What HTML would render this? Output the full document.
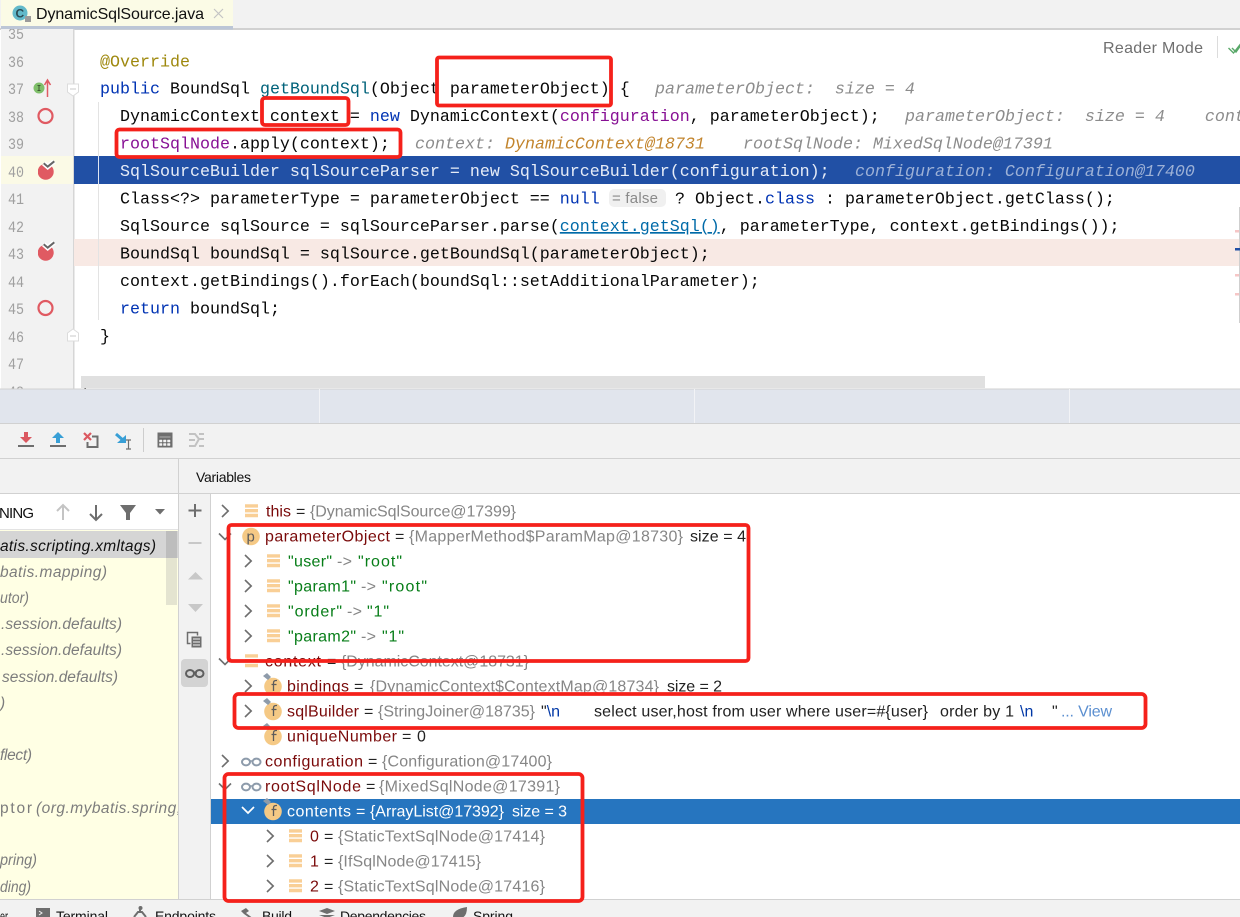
<!DOCTYPE html>
<html><head><meta charset="utf-8"><title>DynamicSqlSource.java</title>
<style>
html,body{margin:0;padding:0;background:#fff;overflow:hidden}
svg{display:block}
text{white-space:pre}
.m{font-family:"Liberation Mono",monospace;font-size:16.67px;fill:#080808}
.n{font-family:"Liberation Mono",monospace;font-size:16px;fill:#a0a0a0}
.h{font-family:"Liberation Mono",monospace;font-size:16.67px;font-style:italic;fill:#8c8c8c}
.s{font-family:"Liberation Sans",sans-serif;font-size:16px}
.v{fill:#7a0a0a}.e{fill:#222}.g{fill:#868686}.t{fill:#067d17}.k{fill:#0033b3}.p{fill:#871094}
.i{font-family:"Liberation Sans",sans-serif;font-size:15.500px;font-style:italic;fill:#7d7d7d}
.b{fill:none;stroke:#f5211b;stroke-width:3.8}
</style></head><body>
<svg width="1240" height="917" viewBox="0 0 1240 917" xmlns="http://www.w3.org/2000/svg">
<defs>
<symbol id="l" width="14" height="14" viewBox="0 0 14 14"><path d="M0 .2h13v3.400H0zM0 5h13v3.400H0zM0 9.800h13v3.400H0z" fill="#f9cf96"/></symbol>
<symbol id="r" width="10" height="14" viewBox="0 0 10 14"><path d="M2 1l6.200 6-6.200 6" fill="none" stroke="#6e6e6e" stroke-width="1.600"/></symbol>
<symbol id="d" width="14" height="10" viewBox="0 0 14 10"><path d="M1 1.500l6 6 6-6" fill="none" stroke="#6e6e6e" stroke-width="1.600"/></symbol>
<symbol id="f" width="22" height="24" viewBox="0 0 22 24"><circle cx="11" cy="14.500" r="8.800" fill="#f5c985"/><path d="M8.500 20V12q0-2.500 2.500-2.500h1M6.500 13.500h5" transform="translate(3 -1)" fill="none" stroke="#5c5c5c" stroke-width="1.300"/><path d="M1 4l4-3 4 4-3 3z" fill="#8e9baa"/></symbol>
<symbol id="g" width="21" height="12" viewBox="0 0 21 12"><ellipse cx="5" cy="6" rx="4" ry="3.400" fill="none" stroke="#8d9bab" stroke-width="2"/><ellipse cx="15.500" cy="6" rx="4" ry="3.400" fill="none" stroke="#8d9bab" stroke-width="2"/><path d="M9 5h2.500" stroke="#8d9bab" stroke-width="1.500"/></symbol>
<symbol id="bp" width="20" height="22" viewBox="0 0 20 22"><circle cx="7.700" cy="11.700" r="8" fill="#e05a62"/><path d="M5.700 3.300l4 3.400 6.600-5.400" fill="none" stroke="#fff" stroke-width="5"/><path d="M5.700 3.300l4 3.400 6.600-5.400" fill="none" stroke="#666" stroke-width="2"/></symbol>
<clipPath id="ed"><rect x="0" y="29" width="1240" height="360"/></clipPath>
<clipPath id="fr"><rect x="0" y="530" width="178" height="369"/></clipPath>
</defs>

<!-- tab bar -->
<rect width="1240" height="917" fill="#f2f2f2"/>
<rect x="0" y="29" width="1240" height="360" fill="#fff"/>
<rect x="0" y="28" width="1240" height="2" fill="#d1d1d1"/>
<rect x="1" y="0" width="232" height="27" fill="#fbfbe6"/>
<rect x="1" y="26" width="232" height="3.500" fill="#bcc6d6"/>
<circle cx="20" cy="13" r="7.500" fill="#62b9ca"/>
<text x="15.500" y="17.500" font-family="Liberation Sans,sans-serif" font-size="12" font-weight="bold" fill="#2c4a52">C</text>
<rect x="25" y="16" width="6" height="6" fill="#9b9b9b"/>
<text class="s" x="36" y="19" textLength="168" fill="#111">DynamicSqlSource.java</text>
<path d="M214 9l9 9M223 9l-9 9" stroke="#c4c4c4" stroke-width="1.200"/>

<!-- gutter -->
<g clip-path="url(#ed)">
<rect x="1" y="29" width="72" height="360" fill="#f2f2f2"/>
<rect x="73" y="29" width="1.500" height="360" fill="#d6d6d6"/>
<rect x="1" y="156" width="72" height="28" fill="#fbfae6"/>
<rect x="74" y="156" width="1166" height="28" fill="#2150a5"/>
<rect x="74" y="239" width="1166" height="27" fill="#f8e9e4"/>
<path d="M98.500 102V320" stroke="#e3e3e3" stroke-width="1"/>
<path d="M98.500 156V184" stroke="#dfe6f3" stroke-width="1"/>

<text class="n" x="8" y="39" textLength="16" lengthAdjust="spacingAndGlyphs">35</text>
<text class="n" x="8" y="67" textLength="16" lengthAdjust="spacingAndGlyphs">36</text>
<text class="n" x="8" y="94" textLength="16" lengthAdjust="spacingAndGlyphs">37</text>
<text class="n" x="8" y="122" textLength="16" lengthAdjust="spacingAndGlyphs">38</text>
<text class="n" x="8" y="149" textLength="16" lengthAdjust="spacingAndGlyphs">39</text>
<text class="n" x="8" y="177" textLength="16" lengthAdjust="spacingAndGlyphs">40</text>
<text class="n" x="8" y="204" textLength="16" lengthAdjust="spacingAndGlyphs">41</text>
<text class="n" x="8" y="232" textLength="16" lengthAdjust="spacingAndGlyphs">42</text>
<text class="n" x="8" y="259" textLength="16" lengthAdjust="spacingAndGlyphs">43</text>
<text class="n" x="8" y="287" textLength="16" lengthAdjust="spacingAndGlyphs">44</text>
<text class="n" x="8" y="314" textLength="16" lengthAdjust="spacingAndGlyphs">45</text>
<text class="n" x="8" y="342" textLength="16" lengthAdjust="spacingAndGlyphs">46</text>
<text class="n" x="8" y="369" textLength="16" lengthAdjust="spacingAndGlyphs">47</text>
<text class="n" x="8" y="397" textLength="16" lengthAdjust="spacingAndGlyphs">48</text>

<!-- gutter icons -->
<circle cx="39" cy="88" r="5.500" fill="#7fbf6a"/><path d="M37.500 85.500h3M39 85.500v5M37.500 90.500h3" stroke="#3d5c32" stroke-width="1"/>
<path d="M47.500 97V81M44.500 85l3-5 3 5" fill="none" stroke="#df5b63" stroke-width="1.500"/>
<circle cx="45.500" cy="116" r="7" fill="none" stroke="#e05a62" stroke-width="2.200"/>
<circle cx="45.500" cy="308" r="7" fill="none" stroke="#e05a62" stroke-width="2.200"/>
<use href="#bp" x="38" y="160"/>
<use href="#bp" x="38" y="241"/>
<path d="M67.500 84h11v8l-5.500 4-5.500-4z" fill="#fff" stroke="#dcdcdc"/><path d="M70 89h6" stroke="#c8c8c8"/>
<path d="M67.500 333l5.500-4 5.500 4v8h-11z" fill="#fff" stroke="#dcdcdc"/><path d="M70 336h6" stroke="#c8c8c8"/>

<!-- code -->
<text class="m" x="100" y="66.500" style="fill:#9e880d">@Override</text>
<text class="m" x="100" y="93.500"><tspan class="k">public</tspan> BoundSql <tspan style="fill:#00627a">getBoundSql</tspan>(Object parameterObject) {</text>
<text class="h" x="655" y="93.500">parameterObject:  size = 4</text>
<text class="m" x="120" y="121">DynamicContext context = <tspan class="k">new</tspan> DynamicContext(<tspan class="p">configuration</tspan>, parameterObject);</text>
<text class="h" x="905" y="121">parameterObject:  size = 4    context: DynamicContext@18731</text>
<text class="m" x="120" y="148.500"><tspan class="p">rootSqlNode</tspan>.apply(context);</text>
<text class="h" x="415" y="148.500">context: <tspan style="fill:#c2842c">DynamicContext@18731</tspan></text>
<text class="h" x="743" y="148.500">rootSqlNode: MixedSqlNode@17391</text>
<text class="m" x="120" y="176" style="fill:#e6ecf7">SqlSourceBuilder sqlSourceParser = new SqlSourceBuilder(configuration);</text>
<text class="h" x="855" y="176" style="fill:#9db1d6">configuration: Configuration@17400</text>
<text class="m" x="120" y="203.500">Class&lt;?&gt; parameterType = parameterObject == <tspan class="k">null</tspan></text>
<rect x="609" y="189" width="57" height="18" rx="5" fill="#f0f0f0"/>
<text class="s" x="612" y="203" textLength="46" style="fill:#8a8a8a;font-size:15px">= false</text>
<text class="m" x="675" y="203.500">? Object.<tspan class="k">class</tspan> : parameterObject.getClass();</text>
<text class="m" x="120" y="231">SqlSource sqlSource = sqlSourceParser.parse(<tspan style="fill:#006aa8;text-decoration:underline">context.getSql()</tspan>, parameterType, context.getBindings());</text>
<text class="m" x="120" y="258.500">BoundSql boundSql = sqlSource.getBoundSql(parameterObject);</text>
<text class="m" x="120" y="286">context.getBindings().forEach(boundSql::setAdditionalParameter);</text>
<text class="m" x="120" y="313.500"><tspan class="k">return</tspan> boundSql;</text>
<text class="m" x="100" y="341">}</text>
<text class="m" x="80" y="396">}</text>

<rect x="81" y="376" width="904" height="12" fill="#e0e0e0"/>
<rect x="1239" y="207" width="1" height="116" fill="#cfcfcf"/>
<rect x="1235" y="230" width="4" height="2.500" fill="#f6c6c6"/>
<rect x="1235" y="248" width="5" height="2.500" fill="#2150a5"/>
<rect x="1235" y="274" width="4" height="2.500" fill="#f6c6c6"/>
<rect x="1235" y="293" width="4" height="2.500" fill="#f6c6c6"/>
<text class="s" x="1103" y="53" textLength="100" style="fill:#6f6f6f">Reader Mode</text>
<rect x="1217" y="36" width="1" height="22" fill="#dcdcdc"/>
<path d="M1228.500 48l5 5 7-9M1232 48l4 4 5-7" fill="none" stroke="#59a869" stroke-width="1.400"/>
</g>

<!-- split band -->
<rect x="0" y="389" width="1240" height="34" fill="#e1e5ed"/>
<rect x="0" y="388.500" width="1240" height="1" fill="#d1d1d1"/>
<rect x="319" y="389" width="1" height="34" fill="#f2f3f6"/>
<rect x="694" y="389" width="1" height="34" fill="#f2f3f6"/>
<rect x="1069" y="389" width="1" height="34" fill="#f2f3f6"/>
<rect x="0" y="423" width="1240" height="1" fill="#d1d1d1"/>

<!-- toolbar -->
<path d="M26 432v6" stroke="#db5860" stroke-width="4"/><path d="M20 437h12l-6 6z" fill="#db5860"/><path d="M18 446h16" stroke="#6e6e6e" stroke-width="2"/>
<path d="M58 437v6" stroke="#389fd6" stroke-width="4"/><path d="M52 438h12l-6-6z" fill="#389fd6"/><path d="M50 446h16" stroke="#6e6e6e" stroke-width="2"/>
<path d="M84 433l7 7M91 433l-7 7" stroke="#db5860" stroke-width="2.200"/><path d="M92 436.500h5.500V447h-10v-5" fill="none" stroke="#6e6e6e" stroke-width="2"/>
<path d="M116 434l8 7" stroke="#389fd6" stroke-width="3"/><path d="M116 442h9v-8z" fill="#389fd6" transform="translate(1 1)"/><path d="M126 440h5M128.500 440v9M126 449h5" stroke="#6e6e6e" stroke-width="1.200" fill="none"/>
<rect x="143" y="428" width="1" height="24" fill="#cdcdcd"/>
<path d="M157.500 432.500h15v15h-15z" fill="#6e6e6e"/><path d="M159.500 437h11M159.500 440h2.500v2h-2.500zM163.500 440h2.500v2h-2.500zM167.500 440h2.500v2h-2.500zM159.500 443.500h2.500v2h-2.500zM163.500 443.500h2.500v2h-2.500zM167.500 443.500h2.500v2h-2.500z" fill="#f2f2f2" stroke="#f2f2f2" stroke-width=".5"/>
<path d="M189 434h6l4 5h5M189 440h6M189 446h6l4-7M199 434h5M199 446h5" fill="none" stroke="#c2c2c2" stroke-width="2"/>
<rect x="0" y="458" width="1240" height="1" fill="#d1d1d1"/>

<!-- variables header -->
<text class="s" x="196" y="482" textLength="55" style="font-size:14px;fill:#111">Variables</text>
<rect x="0" y="493" width="1240" height="1" fill="#d1d1d1"/>
<rect x="178" y="459" width="1" height="440" fill="#d1d1d1"/>

<!-- frames panel -->
<rect x="0" y="494" width="178" height="36" fill="#fff"/>
<rect x="0" y="529" width="178" height="1" fill="#e3e3e3"/>
<text class="s" x="-1" y="518" textLength="35" style="fill:#111;font-size:15px">NING</text>
<path d="M63 520v-15M57 511l6-6 6 6" fill="none" stroke="#c4c4c4" stroke-width="2"/>
<path d="M96 505v15M90 514l6 6 6-6" fill="none" stroke="#6e6e6e" stroke-width="2"/>
<path d="M120 505h16l-6 8v7h-4v-7z" fill="#6e6e6e"/>
<path d="M155 509h10l-5 5.500z" fill="#6e6e6e"/>
<rect x="0" y="530" width="178" height="369" fill="#ffffe4"/>
<rect x="0" y="531" width="178" height="27" fill="#d5d5d5"/>
<rect x="166" y="531" width="11" height="27" fill="#bdbdbd"/>
<rect x="166" y="558" width="11" height="47" fill="#e4e4d0"/>
<g clip-path="url(#fr)">
<text class="i" x="0" y="551" textLength="156" style="fill:#111">atis.scripting.xmltags)</text>
<text class="i" x="0" y="577" textLength="107">batis.mapping)</text>
<text class="i" x="0" y="603" textLength="29" lengthAdjust="spacingAndGlyphs">utor)</text>
<text class="i" x="1" y="629" textLength="121">.session.defaults)</text>
<text class="i" x="1" y="655" textLength="121">.session.defaults)</text>
<text class="i" x="2" y="682" textLength="116">session.defaults)</text>
<text class="i" x="0" y="708">)</text>
<text class="i" x="0" y="760" textLength="32">flect)</text>
<text class="s" x="0" y="813" textLength="32" style="fill:#7d7d7d;font-size:15.500px">ptor</text>
<text class="i" x="36" y="813" textLength="145">(org.mybatis.spring,</text>
<text class="i" x="0" y="865" textLength="37" lengthAdjust="spacingAndGlyphs">pring)</text>
<text class="i" x="0" y="892" textLength="31" lengthAdjust="spacingAndGlyphs">ding)</text>
</g>

<!-- side buttons -->
<rect x="210" y="494" width="1" height="405" fill="#d1d1d1"/>
<path d="M188.500 510.500h13M195 504v13" stroke="#6e6e6e" stroke-width="2"/>
<path d="M188.500 543h13" stroke="#c8c8c8" stroke-width="2"/>
<path d="M188 579.500h15l-7.500-7.500z" fill="#c8c8c8"/>
<path d="M188 604h15l-7.500 8z" fill="#c8c8c8"/>
<rect x="187.500" y="632.500" width="10" height="11" fill="none" stroke="#6e6e6e" stroke-width="1.500"/>
<rect x="191" y="636" width="11" height="12" fill="#6e6e6e" stroke="#f2f2f2" stroke-width="1"/><path d="M193 639h7M193 642h7M193 645h7" stroke="#f2f2f2"/>
<rect x="181" y="659" width="27" height="28" rx="4" fill="#d3d3d3"/>
<ellipse cx="190" cy="673.500" rx="4" ry="3.500" fill="none" stroke="#5f5f5f" stroke-width="2"/><ellipse cx="199.500" cy="673.500" rx="4" ry="3.500" fill="none" stroke="#5f5f5f" stroke-width="2"/><path d="M193 672.500h4" stroke="#5f5f5f" stroke-width="2"/>

<!-- variables -->
<rect x="211" y="494" width="1029" height="405" fill="#fff"/>
<rect x="211" y="799" width="1029" height="25" fill="#2675bf"/>

<use href="#r" x="220" y="504"/><use href="#l" x="245" y="504"/>
<text class="s v" x="266" y="516.500" textLength="25">this</text><text class="s e" x="296" y="516.500">=</text><text class="s g" x="310" y="516.500" textLength="206">{DynamicSqlSource@17399}</text>

<use href="#d" x="218" y="532"/>
<circle cx="251" cy="536.500" r="8.800" fill="#f5c985"/><text class="s" x="246.500" y="541.500" style="fill:#5c5c5c;font-size:15px">p</text>
<text class="s v" x="265" y="541.500" textLength="125">parameterObject</text><text class="s e" x="395" y="541.500">=</text><text class="s g" x="409" y="541.500" textLength="274">{MapperMethod$ParamMap@18730}</text><text class="s e" x="690" y="541.500" textLength="56">size = 4</text>

<use href="#r" x="243" y="554"/><use href="#l" x="267" y="554"/>
<text class="s t" x="288" y="566.500" textLength="44">"user"</text><text class="s g" x="337" y="566.500" textLength="15">-&gt;</text><text class="s t" x="358" y="566.500" textLength="44">"root"</text>
<use href="#r" x="243" y="579"/><use href="#l" x="267" y="579"/>
<text class="s t" x="288" y="591.500" textLength="68">"param1"</text><text class="s g" x="361" y="591.500" textLength="15">-&gt;</text><text class="s t" x="382" y="591.500" textLength="45">"root"</text>
<use href="#r" x="243" y="604"/><use href="#l" x="267" y="604"/>
<text class="s t" x="288" y="616.500" textLength="54">"order"</text><text class="s g" x="347" y="616.500" textLength="15">-&gt;</text><text class="s t" x="367" y="616.500" textLength="22">"1"</text>
<use href="#r" x="243" y="629"/><use href="#l" x="267" y="629"/>
<text class="s t" x="288" y="641.500" textLength="68">"param2"</text><text class="s g" x="361" y="641.500" textLength="15">-&gt;</text><text class="s t" x="382" y="641.500" textLength="22">"1"</text>

<use href="#d" x="218" y="657"/><use href="#l" x="245" y="654"/>
<text class="s v" x="265" y="666.500" textLength="56">context</text><text class="s e" x="327" y="666.500">=</text><text class="s g" x="341" y="666.500" textLength="188">{DynamicContext@18731}</text>

<use href="#r" x="243" y="679"/><use href="#f" x="262" y="672"/>
<text class="s v" x="287" y="691.500" textLength="62">bindings</text><text class="s e" x="354" y="691.500">=</text><text class="s g" x="370" y="691.500" textLength="289">{DynamicContext$ContextMap@18734}</text><text class="s e" x="667" y="691.500" textLength="55">size = 2</text>

<use href="#r" x="243" y="704"/><use href="#f" x="262" y="697"/>
<text class="s v" x="287" y="716.500" textLength="72">sqlBuilder</text><text class="s e" x="364" y="716.500">=</text><text class="s g" x="378" y="716.500" textLength="157">{StringJoiner@18735}</text>
<text class="s e" x="541" y="716.500">"<tspan style="fill:#0037a6">\n</tspan></text>
<text class="s e" x="594" y="716.500" textLength="334">select user,host from user where user=#{user}</text>
<text class="s e" x="940" y="716.500" textLength="74">order by 1</text>
<text class="s" x="1020" y="716.500" style="fill:#0037a6">\n</text>
<text class="s e" x="1052" y="716.500">"</text>
<text class="s" x="1061" y="716.500" textLength="51" style="fill:#5b8fd0">... View</text>

<use href="#f" x="262" y="722"/>
<text class="s v" x="287" y="741.500" textLength="110">uniqueNumber</text><text class="s e" x="402" y="741.500">=</text><text class="s e" x="417" y="741.500">0</text>

<use href="#r" x="220" y="754"/><use href="#g" x="241" y="756"/>
<text class="s v" x="265" y="766.500" textLength="98">configuration</text><text class="s e" x="368" y="766.500">=</text><text class="s g" x="382" y="766.500" textLength="170">{Configuration@17400}</text>

<use href="#d" x="218" y="782"/><use href="#g" x="241" y="781"/>
<text class="s v" x="265" y="791.500" textLength="96">rootSqlNode</text><text class="s e" x="366" y="791.500">=</text><text class="s g" x="379" y="791.500" textLength="181">{MixedSqlNode@17391}</text>

<path d="M242 807l6 6 6-6" fill="none" stroke="#fff" stroke-width="1.700"/><use href="#f" x="262" y="797"/>
<text class="s" x="287" y="816.500" textLength="64" fill="#fff">contents</text><text class="s" x="356" y="816.500" fill="#fff">=</text><text class="s" x="370" y="816.500" textLength="134" fill="#fff">{ArrayList@17392}</text><text class="s" x="512" y="816.500" textLength="55" fill="#fff">size = 3</text>

<use href="#r" x="265" y="829"/><use href="#l" x="289" y="829"/>
<text class="s v" x="310" y="841.500">0</text><text class="s e" x="324" y="841.500">=</text><text class="s g" x="338" y="841.500" textLength="207">{StaticTextSqlNode@17414}</text>
<use href="#r" x="265" y="854"/><use href="#l" x="289" y="854"/>
<text class="s v" x="310" y="866.500">1</text><text class="s e" x="324" y="866.500">=</text><text class="s g" x="338" y="866.500" textLength="143">{IfSqlNode@17415}</text>
<use href="#r" x="265" y="879"/><use href="#l" x="289" y="879"/>
<text class="s v" x="310" y="891.500">2</text><text class="s e" x="324" y="891.500">=</text><text class="s g" x="338" y="891.500" textLength="207">{StaticTextSqlNode@17416}</text>

<!-- bottom bar -->
<rect x="0" y="899" width="1240" height="18" fill="#f2f2f2"/>
<rect x="0" y="899" width="1240" height="1" fill="#d1d1d1"/>
<text class="s" x="0" y="921" textLength="8" lengthAdjust="spacingAndGlyphs" style="font-size:14px;fill:#111">er</text>
<rect x="36" y="908" width="14" height="12" fill="#6e6e6e"/><path d="M39 911l3 2-3 2" stroke="#f2f2f2" fill="none"/>
<text class="s" x="56" y="921" textLength="52" style="font-size:14px;fill:#111">Terminal</text>
<path d="M134 917l4-5h4l4 5M140 912v-3" stroke="#6e6e6e" stroke-width="2" fill="none"/><circle cx="140.500" cy="908" r="2" fill="#6e6e6e"/>
<text class="s" x="155" y="921" textLength="61" style="font-size:14px;fill:#111">Endpoints</text>
<path d="M241 911l5-3 3 3-3 2 8 6h-3l-7-5z" fill="#6e6e6e"/>
<text class="s" x="262" y="921" textLength="30" style="font-size:14px;fill:#111">Build</text>
<path d="M327 908l8 3-8 3-8-3zM319 915l8 3 8-3" fill="#6e6e6e"/>
<text class="s" x="340" y="921" textLength="86" style="font-size:14px;fill:#111">Dependencies</text>
<path d="M453 917q0-8 14-10q0 10-6 11z" fill="#6e6e6e"/>
<text class="s" x="473" y="921" textLength="40" style="font-size:14px;fill:#111">Spring</text>

<!-- red annotation boxes -->
<rect class="b" x="437" y="57.500" width="174" height="48" rx="2"/>
<rect class="b" x="262" y="98" width="86.500" height="27" rx="3"/>
<rect class="b" x="116.500" y="129.500" width="284" height="27.500" rx="3"/>
<rect class="b" x="228.500" y="525" width="520" height="136" rx="3"/>
<rect class="b" x="234.500" y="694" width="911" height="34" rx="4"/>
<rect class="b" x="224.500" y="774" width="358" height="127" rx="4"/>
</svg>
</body></html>
